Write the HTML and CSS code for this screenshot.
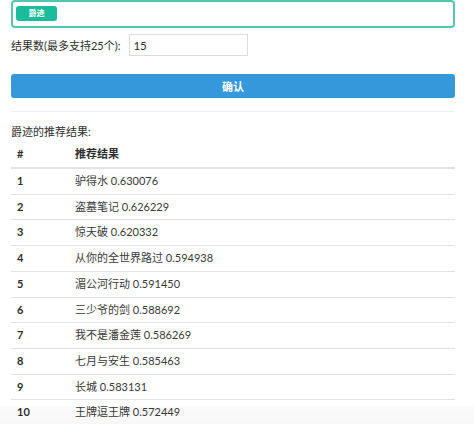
FILE: index.html
```html
<!DOCTYPE html>
<html lang="zh-CN">
<head>
<meta charset="utf-8">
<title>推荐结果</title>
<link rel="stylesheet" href="styles.css">
</head>
<body>
<div class="page">
  <div class="tags-box"><span class="tag">爵迹</span></div>
  <div class="count-row">
    <label class="count-label" for="count">结果数(最多支持25个):</label>
    <input class="count-input" id="count" type="text" value="15">
  </div>
  <button class="confirm" type="button">确认</button>
  <hr class="sep">
  <div class="caption">爵迹的推荐结果:</div>
  <table class="results">
    <thead>
      <tr><th class="col-num">#</th><th>推荐结果</th></tr>
    </thead>
    <tbody>
      <tr><th>1</th><td>驴得水 0.630076</td></tr>
      <tr><th>2</th><td>盗墓笔记 0.626229</td></tr>
      <tr><th>3</th><td>惊天破 0.620332</td></tr>
      <tr><th>4</th><td>从你的全世界路过 0.594938</td></tr>
      <tr><th>5</th><td>湄公河行动 0.591450</td></tr>
      <tr><th>6</th><td>三少爷的剑 0.588692</td></tr>
      <tr><th>7</th><td>我不是潘金莲 0.586269</td></tr>
      <tr><th>8</th><td>七月与安生 0.585463</td></tr>
      <tr><th>9</th><td>长城 0.583131</td></tr>
      <tr><th>10</th><td>王牌逗王牌 0.572449</td></tr>
    </tbody>
  </table>
</div>
<div class="bottom-fade"></div>
</body>
</html>
```
FILE: styles.css
```css
body {
  margin: 0;
  background: #fff;
  color: #2f2f2f;
  font-family: Lato, "Noto Sans CJK SC", sans-serif;
  font-size: 11px;
}

.page {
  width: 444px;
  margin-left: 11px;
}

.tags-box {
  box-sizing: border-box;
  height: 28px;
  border: 2px solid #52c9ac;
  border-radius: 4px;
  padding: 4px 3px;
}

.tag {
  display: inline-block;
  vertical-align: top;
  width: 41px;
  height: 15px;
  line-height: 15px;
  border-radius: 3px;
  background: #1abc9c;
  color: #fff;
  font-size: 8px;
  font-weight: bold;
  text-align: center;
}

.count-row {
  display: flex;
  align-items: center;
  margin-top: 6px;
  height: 22px;
}

.count-label {
  margin-right: 9px;
}

.count-input {
  box-sizing: border-box;
  width: 119px;
  height: 22px;
  margin: 0;
  padding: 0 3px;
  border: 1px solid #dcdcdc;
  border-radius: 0;
  font-family: Lato, "Noto Sans CJK SC", sans-serif;
  font-size: 11.5px;
  color: #2f2f2f;
  outline: none;
}

.confirm {
  display: block;
  width: 100%;
  height: 24px;
  margin-top: 18px;
  border: none;
  border-radius: 3px;
  background: #3498db;
  color: #fff;
  font-family: Lato, "Noto Sans CJK SC", sans-serif;
  font-size: 11px;
  font-weight: bold;
  padding: 0;
}

.sep {
  margin: 13px 0 0;
  border: 0;
  border-top: 1px solid #eee;
  height: 0;
}

.caption {
  margin-top: 11px;
  line-height: 18px;
}

.results {
  width: 100%;
  border-collapse: collapse;
}

.results th,
.results td {
  text-align: left;
  padding: 4px 6px;
  line-height: 16.7px;
  border-top: 1px solid #e2e2e2;
}

.results th {
  font-weight: bold;
}

.results td {
  font-weight: normal;
  color: #3a3a3a;
}

.results thead th {
  border-top: none;
  border-bottom: 2px solid #e2e2e2;
  padding: 5px 6px;
  line-height: 16px;
}

.results .col-num {
  width: 46px;
}

.bottom-fade {
  position: fixed;
  left: 0;
  right: 0;
  bottom: 0;
  height: 18px;
  background: linear-gradient(rgba(0, 0, 0, 0.015), rgba(0, 0, 0, 0.03));
  pointer-events: none;
}
```
